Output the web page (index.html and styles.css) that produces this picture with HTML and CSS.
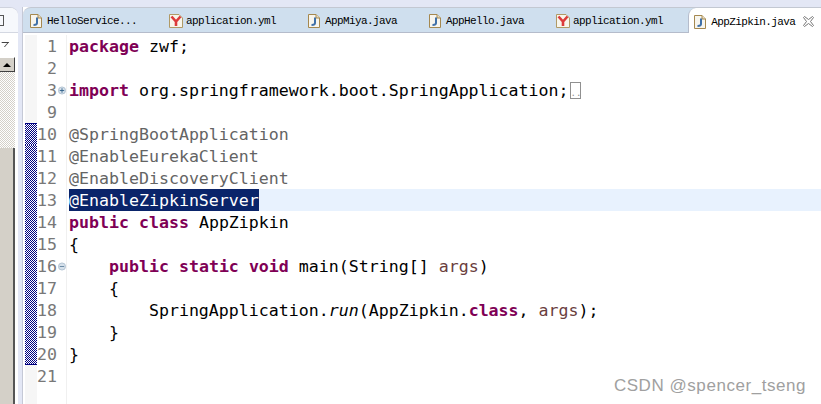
FILE: index.html
```html
<!DOCTYPE html>
<html lang="en">

<head>
    <meta charset="UTF-8">
    <meta name="viewport" content="width=device-width, initial-scale=1.0">
    <title>AppZipkin.java</title>

    <link rel="stylesheet" href="styles.css">

</head>

<body>
    <svg class="icon-defs" width="0" height="0">
        <symbol id="icon-java" viewBox="0 0 12 14">
            <path d="M0.5 0.5H8L11.5 4V13.5H0.5Z" fill="#f7f5ee" stroke="#a5884f" />
            <path d="M8 0.5V4H11.5" fill="#e8dfc6" stroke="#a5884f" />
            <path d="M7 3.5V9Q7 11 3.5 11" fill="none" stroke="#3f70a8" stroke-width="2" />
        </symbol>
        <symbol id="icon-yml" viewBox="0 0 14 14">
            <path d="M0.5 0.5H10L13.5 4V13.5H0.5Z" fill="#f8f5ea" stroke="#b09a66" />
            <path d="M2.5 2.5L7 7.5L11.5 2.5M7 7.5V12" fill="none" stroke="#dc3b3b" stroke-width="2.6" />
        </symbol>
        <symbol id="icon-expand" viewBox="0 0 9 9">
            <circle cx="4.5" cy="4.5" r="4" fill="#d5e0ea" stroke="#aebfce" />
            <path d="M2 4.5H7M4.5 2V7" stroke="#2f5f88" />
        </symbol>
        <symbol id="icon-collapse" viewBox="0 0 9 9">
            <circle cx="4.5" cy="4.5" r="4" fill="#d5e0ea" stroke="#aebfce" />
            <path d="M2 4.5H7" stroke="#5f7f9c" />
        </symbol>
    </svg>

    <div class="container">
        <!-- Left view, mostly cut off -->
        <div class="side">
            <div class="side-head">
                <div class="side-icon"></div>
            </div>
            <div class="side-body">
                <div class="side-menu"></div>
            </div>
            <div class="scrollbar">
                <div class="scroll-btn"><span class="arrow-up"></span></div>
                <div class="scroll-track"></div>
                <div class="scroll-thumb"></div>
            </div>
        </div>

        <div class="editor">
            <!-- Tabs -->
            <div class="tabs">
                <div class="tab"><svg class="icon"><use href="#icon-java" /></svg>HelloService...</div>
                <div class="tab"><svg class="icon icon-wide"><use href="#icon-yml" /></svg>application.yml</div>
                <div class="tab"><svg class="icon"><use href="#icon-java" /></svg>AppMiya.java</div>
                <div class="tab"><svg class="icon"><use href="#icon-java" /></svg>AppHello.java</div>
                <div class="tab"><svg class="icon icon-wide"><use href="#icon-yml" /></svg>application.yml</div>
                <div class="tab tab-active"><svg class="icon"><use href="#icon-java" /></svg>AppZipkin.java<svg class="tab-close" viewBox="0 0 11 11"><path d="M0.5 1.5L1.5 0.5L5.5 3.5L9.5 0.5L10.5 1.5L7.5 5.5L10.5 9.5L9.5 10.5L5.5 7.5L1.5 10.5L0.5 9.5L3.5 5.5Z" fill="#fff" stroke="#777" /></svg></div>
            </div>

            <!-- Source -->
            <div class="source">
                <div class="row"><span class="ruler"></span><span class="num">1</span><span class="fold"></span><code class="code"><b>package</b> zwf;</code></div>
                <div class="row"><span class="ruler"></span><span class="num">2</span><span class="fold"></span><code class="code"></code></div>
                <div class="row"><span class="ruler"></span><span class="num">3</span><span class="fold"><svg class="fold-icon"><use href="#icon-expand" /></svg></span><code class="code"><b>import</b> org.springframework.boot.SpringApplication;<span class="folded">..</span></code></div>
                <div class="row"><span class="ruler"></span><span class="num">9</span><span class="fold"></span><code class="code"></code></div>
                <div class="row"><span class="ruler mark mark-top"></span><span class="num">10</span><span class="fold"></span><code class="code"><span class="anno">@SpringBootApplication</span></code></div>
                <div class="row"><span class="ruler mark"></span><span class="num">11</span><span class="fold"></span><code class="code"><span class="anno">@EnableEurekaClient</span></code></div>
                <div class="row"><span class="ruler mark"></span><span class="num">12</span><span class="fold"></span><code class="code"><span class="anno">@EnableDiscoveryClient</span></code></div>
                <div class="row"><span class="ruler mark"></span><span class="num">13</span><span class="fold"></span><code class="code code-current"><span class="selected">@EnableZipkinServer</span></code></div>
                <div class="row"><span class="ruler mark"></span><span class="num">14</span><span class="fold"></span><code class="code"><b>public</b> <b>class</b> AppZipkin</code></div>
                <div class="row"><span class="ruler mark"></span><span class="num">15</span><span class="fold"></span><code class="code">{</code></div>
                <div class="row"><span class="ruler mark"></span><span class="num">16</span><span class="fold"><svg class="fold-icon"><use href="#icon-collapse" /></svg></span><code class="code">    <b>public</b> <b>static</b> <b>void</b> main(String[] <span class="var">args</span>)</code></div>
                <div class="row"><span class="ruler mark"></span><span class="num">17</span><span class="fold"></span><code class="code">    {</code></div>
                <div class="row"><span class="ruler mark"></span><span class="num">18</span><span class="fold"></span><code class="code">        SpringApplication.<em>run</em>(AppZipkin.<b>class</b>, <span class="var">args</span>);</code></div>
                <div class="row"><span class="ruler mark"></span><span class="num">19</span><span class="fold"></span><code class="code">    }</code></div>
                <div class="row"><span class="ruler mark mark-bottom"></span><span class="num">20</span><span class="fold"></span><code class="code">}</code></div>
                <div class="row"><span class="ruler"></span><span class="num">21</span><span class="fold"></span><code class="code"></code></div>
                <div class="row row-rest"><span class="ruler"></span><span class="num"></span><span class="fold"></span><code class="code"></code></div>
            </div>
        </div>
    </div>

    <!-- Watermark -->
    <div class="watermark">CSDN @spencer_tseng</div>
</body>

</html>
```

FILE: styles.css
```css
html,
body {
    margin: 0;
    height: 100%;
    overflow: hidden;
}

body {
    background-color: #e3e7f5;
}

.icon-defs {
    position: absolute;
}

.container {
    display: flex;
    height: 404px;
    padding-top: 7px;
    box-sizing: border-box;
}

/* Left view */
.side {
    width: 18px;
    margin-right: 4px;
    display: flex;
    flex-direction: column;
    background-color: #fff;
    border-top: 1px solid #cfd3de;
    border-top-right-radius: 8px;
    flex-shrink: 0;
}

.side-head {
    height: 24px;
    background-color: #f6f8fc;
    border-top-right-radius: 8px;
    border-bottom: 1px solid #d4d8e2;
    display: flex;
    align-items: center;
}

.side-icon {
    width: 3px;
    height: 9px;
    border: 1px solid #555;
    border-left: none;
}

.side-body {
    height: 24px;
}

.side-menu {
    width: 6px;
    height: 4px;
    margin-top: 9px;
    border-top: 1px solid #444;
    border-right: 1px solid #444;
    transform: skewX(-40deg);
}

.scrollbar {
    width: 15px;
    flex: 1;
    display: flex;
    flex-direction: column;
}

.scroll-btn {
    height: 15px;
    box-sizing: border-box;
    background-color: #d4d0c8;
    border-top: 1px solid #fff;
    border-bottom: 1px solid #404040;
    border-right: 1px solid #404040;
    display: flex;
    align-items: center;
    justify-content: center;
}

.arrow-up {
    width: 0;
    height: 0;
    border-left: 4px solid transparent;
    border-right: 4px solid transparent;
    border-bottom: 4px solid #000;
}

.scroll-track {
    height: 76px;
    background-color: #fff;
    background-image: url("data:image/svg+xml,%3Csvg xmlns='http://www.w3.org/2000/svg' width='2' height='2' shape-rendering='crispEdges'%3E%3Crect width='1' height='1' fill='%23d4d0c8'/%3E%3Crect x='1' y='1' width='1' height='1' fill='%23d4d0c8'/%3E%3C/svg%3E");
}

.scroll-thumb {
    flex: 1;
    background-color: #d4d0c8;
    border-right: 2px solid #555;
}

/* Editor */
.editor {
    flex: 1;
    min-width: 0;
    display: flex;
    flex-direction: column;
    background-color: #fff;
    border-left: 1px solid #c5c9d6;
}

.tabs {
    height: 26px;
    display: flex;
    box-sizing: border-box;
    background-color: #cfdfee;
    border-top: 1px solid #c3c8d2;
    border-bottom: 1px solid #b5bccb;
    border-top-left-radius: 8px;
    padding-left: 1px;
    font-family: "Liberation Mono", monospace;
    font-size: 11px;
    letter-spacing: -0.6px;
    color: #000;
}

.tab {
    display: flex;
    align-items: center;
    padding: 2px 26px 0 6px;
    white-space: pre;
}

.tab-active {
    flex: 1;
    background-color: #fff;
    border-left: 1px solid #b5bccb;
    border-top-left-radius: 8px;
    margin-left: -1px;
    margin-bottom: -1px;
    padding-left: 5px;
    padding-right: 7px;
}

.icon {
    width: 12px;
    height: 14px;
    margin-right: 5px;
    flex-shrink: 0;
}

.icon-wide {
    width: 14px;
    margin-right: 3px;
}

.tab-close {
    width: 11px;
    height: 11px;
    margin-left: auto;
    flex-shrink: 0;
}

.source {
    flex: 1;
    display: flex;
    flex-direction: column;
    padding: 2px 0 0 2px;
    font-family: "DejaVu Sans Mono", monospace;
    font-size: 16.6px;
}

.row {
    display: flex;
    height: 22px;
    line-height: 24px;
}

.row-rest {
    flex: 1;
}

.ruler {
    width: 12px;
    background-color: #f6f6f6;
    flex-shrink: 0;
    box-sizing: border-box;
}

.mark {
    background-color: #fff;
    background-image: url("data:image/svg+xml,%3Csvg xmlns='http://www.w3.org/2000/svg' width='2' height='2' shape-rendering='crispEdges'%3E%3Crect width='1' height='1' fill='%23000080'/%3E%3Crect x='1' y='1' width='1' height='1' fill='%23000080'/%3E%3C/svg%3E");
}

.mark-top {
    border-top: 1px solid #000080;
}

.mark-bottom {
    border-bottom: 1px solid #000080;
}

.num {
    width: 20px;
    text-align: right;
    color: #787878;
    flex-shrink: 0;
}

.fold {
    width: 9px;
    margin-right: 2px;
    border-right: 1px solid #f0f0f0;
    display: flex;
    align-items: center;
    flex-shrink: 0;
}

.fold-icon {
    width: 9px;
    height: 9px;
    margin-left: 1px;
}

.code {
    flex: 1;
    font: inherit;
    white-space: pre;
    color: #000;
}

.code b {
    color: #7f0055;
}

.anno {
    color: #646464;
}

.var {
    color: #6a3e3e;
}

.code-current {
    background-color: #e8f2fe;
}

.selected {
    display: inline-block;
    height: 22px;
    vertical-align: top;
    background-color: #0a246a;
    color: #fff;
}

.folded {
    display: inline-block;
    box-sizing: border-box;
    width: 11px;
    height: 17px;
    margin-left: 1px;
    border: 1px solid #909090;
    color: #909090;
    font-size: 9px;
    line-height: 20px;
    vertical-align: -3px;
    overflow: hidden;
}

.watermark {
    position: absolute;
    right: 15px;
    bottom: 8px;
    font-family: "Liberation Sans", sans-serif;
    font-size: 17px;
    letter-spacing: 0.55px;
    color: #a0a0a0;
}
```
